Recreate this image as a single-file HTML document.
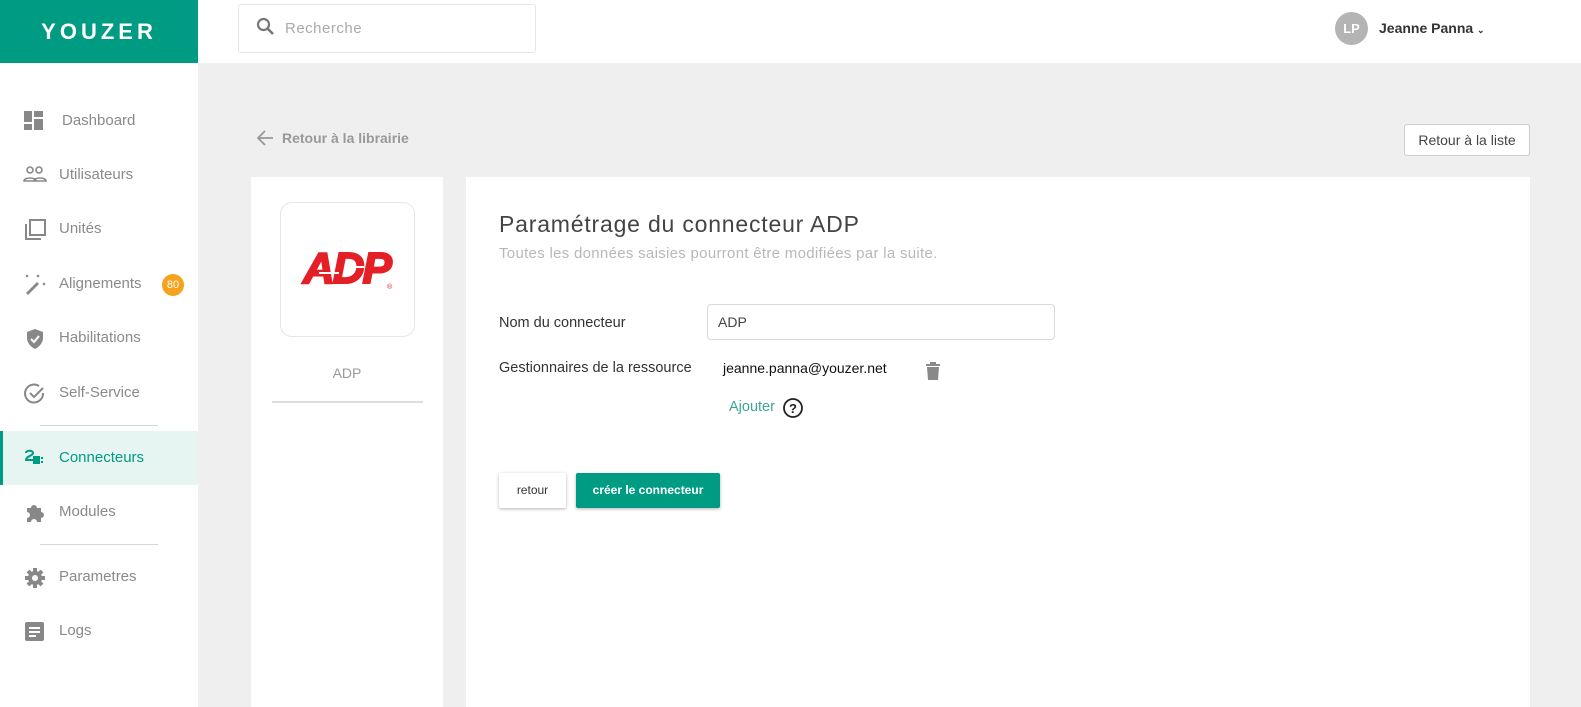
<!DOCTYPE html>
<html><head><meta charset="utf-8"><style>
*{box-sizing:border-box;margin:0;padding:0}
body{width:1581px;height:707px;overflow:hidden;background:#efefef;font-family:"Liberation Sans",sans-serif;position:relative}
.abs{position:absolute}
#logo{left:0;top:0;width:198px;height:63px;background:#009b83;color:#fff;font-size:22px;letter-spacing:4px;text-align:center;line-height:63px;font-weight:bold}
#top{left:198px;top:0;width:1383px;height:63px;background:#fff}
#side{left:0;top:63px;width:198px;height:644px;background:#fff}
.nav{position:absolute;left:0;width:198px;height:54px;line-height:54px;font-size:15px;color:#8a8a8a}
.nav span{position:absolute;left:59px}
.nav svg{position:absolute;left:23px;top:16px}
.sep{position:absolute;left:40px;width:118px;height:1px;background:#d6d6d6}
.card{background:#fff}
</style></head><body>
<div id="logo" class="abs">YOUZER</div>
<div id="top" class="abs"></div>
<div class="abs" style="left:238px;top:4px;width:298px;height:49px;border:1px solid #e3e6ea;border-radius:3px;background:#fff">
<svg class="abs" style="left:17px;top:12px" width="20" height="20" viewBox="0 0 20 20"><circle cx="7.5" cy="7.5" r="5.5" fill="none" stroke="#777" stroke-width="2.2"/><path d="M11.5 11.5 L17 17" stroke="#777" stroke-width="2.6"/></svg>
<div class="abs" style="left:46px;top:15px;font-size:15px;color:#aaa;letter-spacing:0.5px">Recherche</div></div>
<div class="abs" style="left:1335px;top:12px;width:33px;height:33px;border-radius:50%;background:#b4b4b4;color:#fff;font-size:13px;font-weight:bold;text-align:center;line-height:33px">LP</div>
<div class="abs" style="left:1379px;top:20px;font-size:14px;color:#333;font-weight:bold">Jeanne Panna <span style="font-size:9px">&#8964;</span></div>

<div id="side" class="abs">
<div class="nav" style="top:31px"><svg width="22" height="22" viewBox="0 0 22 22" fill="#888"><rect x="1" y="1" width="8" height="11"/><rect x="11" y="1" width="9" height="6"/><rect x="1" y="14" width="8" height="6"/><rect x="11" y="9" width="9" height="11"/></svg><span style="left:62px">Dashboard</span></div>
<div class="nav" style="top:85px"><svg width="24" height="22" viewBox="0 0 24 22" fill="none" stroke="#888" stroke-width="1.6"><circle cx="7" cy="6" r="3"/><circle cx="16" cy="6" r="3"/><path d="M1 17c0-4 12-4 12 0zM11 17c0-4 12-4 12 0z"/></svg><span>Utilisateurs</span></div>
<div class="nav" style="top:139px"><svg width="24" height="24" viewBox="0 0 24 24" fill="none" stroke="#888" stroke-width="2"><rect x="7" y="2" width="15" height="15"/><path d="M3 6v15h15"/></svg><span>Unités</span></div>
<div class="nav" style="top:194px"><svg width="24" height="24" viewBox="0 0 24 24"><path d="M3 20l11-11 2 2-11 11z" fill="#888"/><path d="M3 2l2 2M5 2l-2 2M14 2l2 2M16 2l-2 2M20 10l2 2M22 10l-2 2" stroke="#888" stroke-width="1.2"/></svg><span>Alignements</span><div class="abs" style="left:162px;top:17px;width:22px;height:22px;border-radius:50%;background:#f6a21c;color:#fff;font-size:11px;line-height:22px;text-align:center">80</div></div>
<div class="nav" style="top:248px"><svg width="24" height="24" viewBox="0 0 24 24"><path d="M12 2l8 3v6c0 5-4 9-8 11-4-2-8-6-8-11V5z" fill="#888"/><path d="M8 12l3 3 5-6" stroke="#fff" stroke-width="2" fill="none"/></svg><span>Habilitations</span></div>
<div class="nav" style="top:303px"><svg width="24" height="24" viewBox="0 0 24 24" fill="none" stroke="#888" stroke-width="2"><path d="M20 11a9 9 0 1 1-4-7"/><path d="M7 11l4 4 9-9"/></svg><span>Self-Service</span></div>
<div class="sep" style="top:362px"></div>
<div style="position:absolute;left:0;top:368px;width:198px;height:54px;background:#e6f5f2;border-left:3px solid #009b83"></div>
<div class="nav" style="top:368px;color:#009b83"><svg width="24" height="22" viewBox="0 0 24 22" fill="none" stroke="#009b83" stroke-width="2"><path d="M3 6c0-3 7-3 7 0s-7 3-7 7h9"/><rect x="11" y="10" width="5" height="6" fill="#009b83"/><path d="M18 11h2M18 15h2"/></svg><span>Connecteurs</span></div>
<div class="nav" style="top:422px"><svg width="24" height="24" viewBox="0 0 24 24" fill="#888"><path d="M4 7h4a3 3 0 1 1 6 0h4v4a3 3 0 1 1 0 6v4h-4a3 3 0 1 0-6 0H4v-4a3 3 0 1 0 0-6z"/></svg><span>Modules</span></div>
<div class="sep" style="top:481px"></div>
<div class="nav" style="top:487px"><svg width="24" height="24" viewBox="0 0 24 24"><circle cx="12" cy="12" r="7" fill="#888"/><path d="M12 2v20M2 12h20M5 5l14 14M19 5L5 19" stroke="#888" stroke-width="4"/><circle cx="12" cy="12" r="3" fill="#fff"/></svg><span>Parametres</span></div>
<div class="nav" style="top:541px"><svg width="24" height="24" viewBox="0 0 24 24"><rect x="2" y="2" width="19" height="19" rx="2" fill="#888"/><path d="M6 8h11M6 12h11M6 16h7" stroke="#fff" stroke-width="2"/></svg><span>Logs</span></div>
</div>

<svg class="abs" style="left:256px;top:129px" width="18" height="18" viewBox="0 0 18 18" fill="none" stroke="#999" stroke-width="1.8"><path d="M17 9H2M9 2L2 9l7 7"/></svg>
<div class="abs" style="left:282px;top:130px;font-size:14px;color:#999;font-weight:bold">Retour à la librairie</div>
<div class="abs" style="left:1404px;top:124px;width:126px;height:32px;border:1px solid #ccc;border-radius:3px;background:#fff;font-size:14px;color:#444;text-align:center;line-height:30px">Retour à la liste</div>

<div class="abs card" style="left:251px;top:177px;width:192px;height:530px">
<div class="abs" style="left:29px;top:25px;width:135px;height:135px;border:1px solid #e3e6ea;border-radius:12px">
<svg class="abs" style="left:18px;top:42px" width="100" height="46" viewBox="0 0 100 46"><text x="4" y="38" font-family="Liberation Sans" font-weight="bold" font-style="italic" font-size="44" fill="#e41f26" stroke="#e41f26" stroke-width="2" letter-spacing="-2">ADP</text><path d="M20 28h20M55 22h10" stroke="#fff" stroke-width="2"/><text x="88" y="44" font-size="7" fill="#e41f26" font-family="Liberation Sans">®</text></svg>
</div>
<div class="abs" style="left:0;top:188px;width:192px;text-align:center;font-size:14px;color:#999">ADP</div>
<div class="abs" style="left:21px;top:224px;width:151px;height:2px;background:#ddd"></div>
</div>

<div class="abs card" style="left:466px;top:177px;width:1064px;height:530px">
<div class="abs" style="left:33px;top:34px;font-size:23px;color:#444;letter-spacing:0.8px">Paramétrage du connecteur ADP</div>
<div class="abs" style="left:33px;top:68px;font-size:15px;color:#b8b8b8;letter-spacing:0.3px">Toutes les données saisies pourront être modifiées par la suite.</div>
<div class="abs" style="left:33px;top:138px;font-size:14.5px;color:#333">Nom du connecteur</div>
<div class="abs" style="left:241px;top:127px;width:348px;height:36px;border:1px solid #d9d9d9;border-radius:4px;font-size:14px;color:#444;line-height:34px;padding-left:10px">ADP</div>
<div class="abs" style="left:33px;top:183px;font-size:14.5px;color:#333">Gestionnaires de la ressource</div>
<div class="abs" style="left:257px;top:183px;font-size:14px;color:#111">jeanne.panna@youzer.net</div>
<svg class="abs" style="left:459px;top:185px" width="16" height="18" viewBox="0 0 16 18" fill="#888"><rect x="1" y="2" width="14" height="2"/><rect x="5" y="0" width="6" height="2"/><path d="M2 5h12l-1 13H3z"/></svg>
<div class="abs" style="left:263px;top:222px;font-size:14.5px;color:#3aa597">Ajouter</div>
<svg class="abs" style="left:316px;top:220px" width="22" height="22" viewBox="0 0 22 22"><circle cx="11" cy="11" r="9" fill="none" stroke="#222" stroke-width="1.8"/><text x="11" y="16" text-anchor="middle" font-size="13" font-weight="bold" font-family="Liberation Sans" fill="#222">?</text></svg>
<div class="abs" style="left:33px;top:296px;width:67px;height:35px;background:#fff;box-shadow:0 1px 3px rgba(0,0,0,.3);border-radius:2px;font-size:12px;color:#333;text-align:center;line-height:35px">retour</div>
<div class="abs" style="left:110px;top:296px;width:144px;height:35px;background:#009b83;box-shadow:0 1px 3px rgba(0,0,0,.3);border-radius:2px;font-size:12px;color:#fff;font-weight:bold;text-align:center;line-height:35px">créer le connecteur</div>
</div>
</body></html>
